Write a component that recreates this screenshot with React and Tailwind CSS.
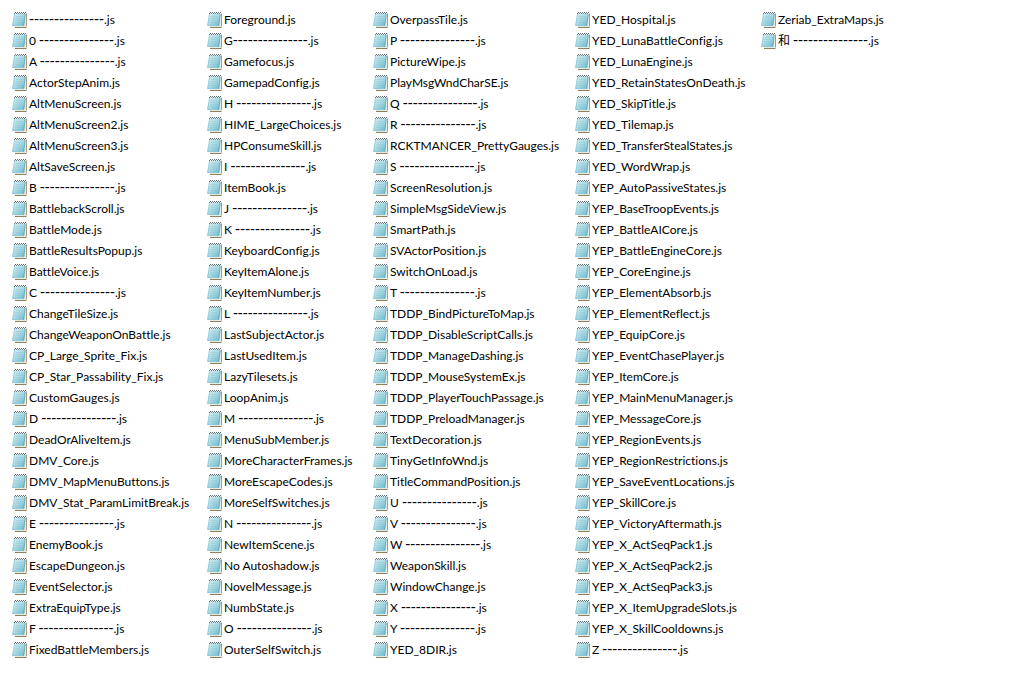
const DASHES = "---------------";

const columns = [
  [
    "#", "0 #", "A #", "ActorStepAnim", "AltMenuScreen", "AltMenuScreen2", "AltMenuScreen3",
    "AltSaveScreen", "B #", "BattlebackScroll", "BattleMode", "BattleResultsPopup", "BattleVoice",
    "C #", "ChangeTileSize", "ChangeWeaponOnBattle", "CP_Large_Sprite_Fix",
    "CP_Star_Passability_Fix", "CustomGauges", "D #", "DeadOrAliveItem", "DMV_Core",
    "DMV_MapMenuButtons", "DMV_Stat_ParamLimitBreak", "E #", "EnemyBook", "EscapeDungeon",
    "EventSelector", "ExtraEquipType", "F #", "FixedBattleMembers",
  ],
  [
    "Foreground", "G#", "Gamefocus", "GamepadConfig", "H #", "HIME_LargeChoices",
    "HPConsumeSkill", "I #", "ItemBook", "J #", "K #", "KeyboardConfig", "KeyItemAlone",
    "KeyItemNumber", "L #", "LastSubjectActor", "LastUsedItem", "LazyTilesets", "LoopAnim",
    "M #", "MenuSubMember", "MoreCharacterFrames", "MoreEscapeCodes", "MoreSelfSwitches",
    "N #", "NewItemScene", "No Autoshadow", "NovelMessage", "NumbState", "O #",
    "OuterSelfSwitch",
  ],
  [
    "OverpassTile", "P #", "PictureWipe", "PlayMsgWndCharSE", "Q #", "R #",
    "RCKTMANCER_PrettyGauges", "S #", "ScreenResolution", "SimpleMsgSideView", "SmartPath",
    "SVActorPosition", "SwitchOnLoad", "T #", "TDDP_BindPictureToMap",
    "TDDP_DisableScriptCalls", "TDDP_ManageDashing", "TDDP_MouseSystemEx",
    "TDDP_PlayerTouchPassage", "TDDP_PreloadManager", "TextDecoration", "TinyGetInfoWnd",
    "TitleCommandPosition", "U #", "V #", "W #", "WeaponSkill", "WindowChange", "X #", "Y #",
    "YED_8DIR",
  ],
  [
    "YED_Hospital", "YED_LunaBattleConfig", "YED_LunaEngine", "YED_RetainStatesOnDeath",
    "YED_SkipTitle", "YED_Tilemap", "YED_TransferStealStates", "YED_WordWrap",
    "YEP_AutoPassiveStates", "YEP_BaseTroopEvents", "YEP_BattleAICore",
    "YEP_BattleEngineCore", "YEP_CoreEngine", "YEP_ElementAbsorb", "YEP_ElementReflect",
    "YEP_EquipCore", "YEP_EventChasePlayer", "YEP_ItemCore", "YEP_MainMenuManager",
    "YEP_MessageCore", "YEP_RegionEvents", "YEP_RegionRestrictions",
    "YEP_SaveEventLocations", "YEP_SkillCore", "YEP_VictoryAftermath", "YEP_X_ActSeqPack1",
    "YEP_X_ActSeqPack2", "YEP_X_ActSeqPack3", "YEP_X_ItemUpgradeSlots",
    "YEP_X_SkillCooldowns", "Z #",
  ],
  ["Zeriab_ExtraMaps", "和 #"],
];

function NotepadIcon() {
  return (
    <svg className="h-4 w-4 shrink-0" viewBox="0 0 16 16" aria-hidden="true">
      <path d="M3 2H14V15H3Z" fill="#f4f1e6" />
      <path d="M14.5 1.5V14.5" fill="none" stroke="#a89c7c" />
      <path d="M3 15.5H14.5" fill="none" stroke="#8d7f5c" />
      <path d="M13.5 2V14.5H3" fill="none" stroke="#e6ebe6" />
      <path d="M2.6 1H13.4L12 14H0.2Z" fill="url(#notepad-page)" />
      <path d="M2.6 1.5L0.6 13.5H11.4" fill="none" stroke="#8cc8d6" strokeWidth="0.8" />
      <path d="M13.2 2L11.8 13.8" fill="none" stroke="#5ba5b8" strokeWidth="0.8" />
      <path d="M4 4.5H11M3.7 6.5H10.8M3.4 8.5H10.5M3.1 10.5H10.2" stroke="#8fc6d4" strokeWidth="0.5" />
      <path d="M2.5 1.5H13.5" stroke="#dfeef1" />
      <path d="M3 0.5H14" stroke="#5c696f" strokeDasharray="1 1" />
      <path d="M2 1.5H13" stroke="#6f8188" strokeDasharray="1 1" />
    </svg>
  );
}

function FileName({ name }) {
  const [before, after] = name.split("#");
  return (
    <span className="whitespace-pre">
      {before}
      {after !== undefined && (
        <span className="font-['Liberation_Sans',sans-serif] text-[15px] leading-none">{DASHES}</span>
      )}
      .js
    </span>
  );
}

export default function App() {
  return (
    <main className="min-h-screen bg-white px-3 py-[9px] font-['Lato','Noto_Sans_CJK_JP',sans-serif] text-[12px] leading-[21px] text-black [font-variant-ligatures:none]">
      <svg className="absolute h-0 w-0" aria-hidden="true">
        <defs>
          <linearGradient id="notepad-page" x1="0" y1="0" x2="1" y2="1">
            <stop offset="0" stopColor="#d8f0f4" />
            <stop offset="0.5" stopColor="#a9d9e4" />
            <stop offset="1" stopColor="#62b4c8" />
          </linearGradient>
        </defs>
      </svg>
      <div className="grid grid-cols-[195px_166px_202px_186px_auto]">
        {columns.map((files, i) => (
          <ul key={i}>
            {files.map((name) => (
              <li key={name} className="flex h-[21px] items-center gap-px">
                <NotepadIcon />
                <FileName name={name} />
              </li>
            ))}
          </ul>
        ))}
      </div>
    </main>
  );
}
